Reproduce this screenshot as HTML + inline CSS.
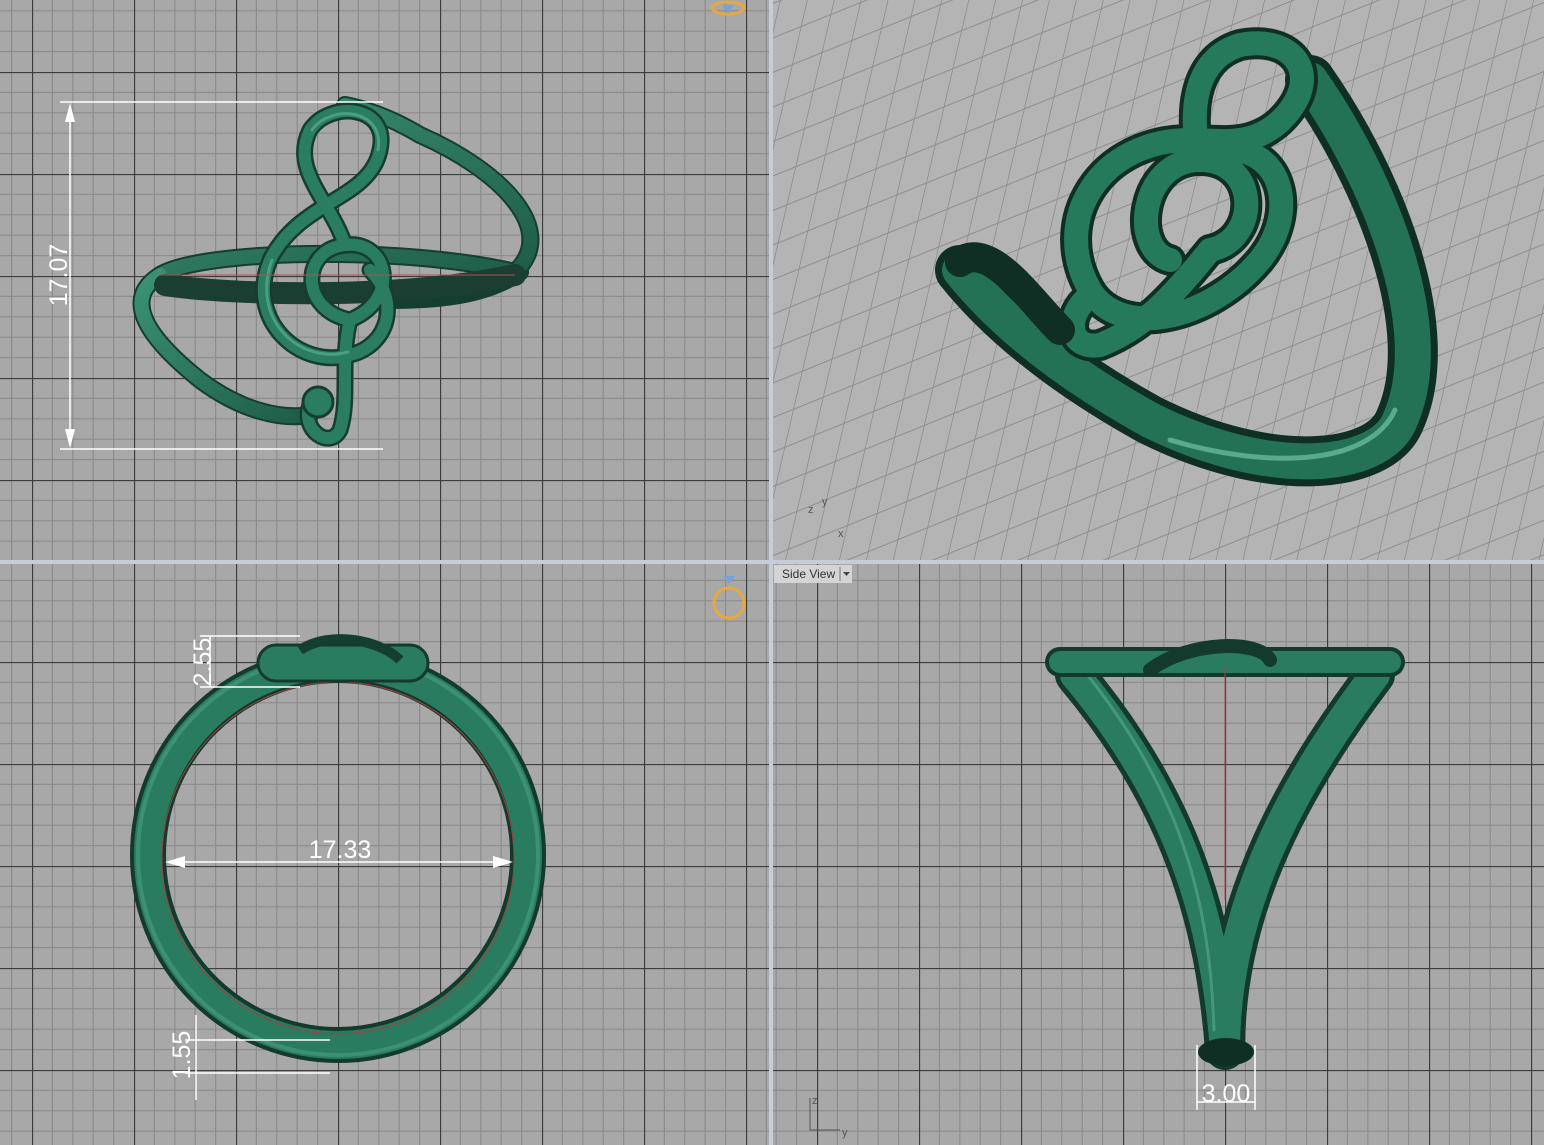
<!DOCTYPE html>
<html><head><meta charset="utf-8"><style>
html,body{margin:0;padding:0;background:#c6cdd9;}
svg{display:block}
text{font-family:"Liberation Sans",sans-serif}
</style></head><body>
<svg width="1544" height="1145" viewBox="0 0 1544 1145" xmlns="http://www.w3.org/2000/svg">
<defs>
<pattern id="gTL" x="32" y="72" width="102" height="102" patternUnits="userSpaceOnUse">
<rect width="102" height="102" fill="#a8a8a8"/>
<g stroke="#8c8c8c" stroke-width="1.2">
<path d="M20.4 0V102M40.8 0V102M61.2 0V102M81.6 0V102M0 20.4H102M0 40.8H102M0 61.2H102M0 81.6H102"/></g>
<path d="M0.5 0V102M0 0.5H102" stroke="#3c3c3c" stroke-width="1.3"/>
</pattern>
<pattern id="gBL" x="32" y="50" width="102" height="102" patternUnits="userSpaceOnUse">
<rect width="102" height="102" fill="#a8a8a8"/>
<g stroke="#8c8c8c" stroke-width="1.2">
<path d="M20.4 0V102M40.8 0V102M61.2 0V102M81.6 0V102M0 20.4H102M0 40.8H102M0 61.2H102M0 81.6H102"/></g>
<path d="M0.5 0V102M0 0.5H102" stroke="#3c3c3c" stroke-width="1.3"/>
</pattern>
<pattern id="gBR" x="1225" y="50" width="102" height="102" patternUnits="userSpaceOnUse">
<rect width="102" height="102" fill="#a8a8a8"/>
<g stroke="#8c8c8c" stroke-width="1.2">
<path d="M20.4 0V102M40.8 0V102M61.2 0V102M81.6 0V102M0 20.4H102M0 40.8H102M0 61.2H102M0 81.6H102"/></g>
<path d="M0.5 0V102M0 0.5H102" stroke="#3c3c3c" stroke-width="1.3"/>
</pattern>
<pattern id="gTR" width="32" height="32" patternUnits="userSpaceOnUse" patternTransform="translate(780 0) rotate(-22) skewX(-35)">
<rect width="32" height="32" fill="#b4b4b4"/>
<path d="M0.5 0V32M0 0.5H32" stroke="#8e8e8e" stroke-width="1"/>
</pattern>
<linearGradient id="gr" x1="0" y1="0" x2="1" y2="1">
<stop offset="0" stop-color="#3a9274"/><stop offset="1" stop-color="#1f5c47"/></linearGradient>
</defs>

<rect x="0" y="0" width="769" height="560" fill="url(#gTL)"/>
<rect x="773" y="0" width="771" height="560" fill="url(#gTR)"/>
<rect x="0" y="564" width="769" height="581" fill="url(#gBL)"/>
<rect x="773" y="564" width="771" height="581" fill="url(#gBR)"/>

<!-- TL ring -->
<g fill="none" stroke-linecap="round" stroke-linejoin="round">
<g stroke="#153d30" stroke-width="18">
<path d="M160 275 C200 250 400 245 515 272 C560 230 500 170 420 135 C395 120 370 110 345 105"/>
<path d="M160 275 C120 300 150 340 200 380 C240 410 280 420 310 415"/>
<path d="M520 272 C480 300 420 300 380 300"/>
</g>
<g stroke="url(#gr)" stroke-width="14">
<path d="M160 275 C200 250 400 245 515 272 C560 230 500 170 420 135 C395 120 370 110 345 105"/>
<path d="M160 275 C120 300 150 340 200 380 C240 410 280 420 310 415"/>
</g>
<path d="M165 285 C230 295 400 300 515 275" stroke="#1a3e31" stroke-width="22"/>
<g stroke="#153d30" stroke-width="17">
<path d="M350 320 C300 310 300 250 345 245 C390 240 400 300 350 320 M345 245 C330 200 290 170 310 130 C330 100 390 105 380 150 C370 200 300 200 270 260 C245 320 300 370 350 355 C390 345 400 300 370 270 M350 320 C340 360 350 400 340 430 C330 450 300 430 310 405"/>
</g>
<g stroke="#2b7d61" stroke-width="12">
<path d="M350 320 C300 310 300 250 345 245 C390 240 400 300 350 320 M345 245 C330 200 290 170 310 130 C330 100 390 105 380 150 C370 200 300 200 270 260 C245 320 300 370 350 355 C390 345 400 300 370 270 M350 320 C340 360 350 400 340 430 C330 450 300 430 310 405"/>
</g>
<g stroke="#5fb497" stroke-width="3" opacity=".6">
<path d="M312 130 C330 104 385 108 378 150 M272 260 C250 320 300 365 348 352"/>
</g>
<circle cx="318" cy="402" r="15" fill="#2b7d61" stroke="#153d30" stroke-width="3"/>
</g>
<line x1="160" y1="275" x2="515" y2="275" stroke="#b05050" stroke-width="1"/>
<!-- TL dims -->
<g stroke="#fff" stroke-width="1.5">
<line x1="60" y1="102" x2="383" y2="102"/><line x1="60" y1="449" x2="383" y2="449"/>
<line x1="70" y1="118" x2="70" y2="434"/>
</g>
<path d="M70 103 L65 122 L75 122Z M70 448 L65 429 L75 429Z" fill="#fff"/>
<text transform="translate(67 275) rotate(-90)" fill="#fff" font-size="25" text-anchor="middle">17.07</text>
<!-- small icon TL -->
<g transform="translate(728 8)"><ellipse cx="0" cy="0" rx="16" ry="6" fill="none" stroke="#e8a840" stroke-width="3"/><path d="M-6 -3 L6 -3 L0 6Z" fill="#7aa0d8"/></g>

<!-- TR ring perspective -->
<g fill="none" stroke-linecap="round">
<path d="M960 270 C1000 320 1060 370 1150 420 C1270 480 1380 470 1400 420 C1440 330 1380 180 1310 80" stroke="#0f2f24" stroke-width="50"/>
<path d="M960 270 C1000 320 1060 370 1150 420 C1270 480 1380 470 1400 420 C1440 330 1380 180 1310 80" stroke="#237256" stroke-width="36"/>
<path d="M1170 440 C1270 470 1370 465 1395 410" stroke="#6fc5a5" stroke-width="5" opacity=".7"/>
<g stroke="#0f2f24" stroke-width="32">
<path d="M1170 260 C1130 250 1140 160 1200 160 C1260 160 1260 240 1210 250 M1200 160 C1190 120 1190 60 1240 45 C1290 35 1320 70 1290 110 C1260 150 1220 140 1190 140 C1100 140 1050 220 1090 290 C1120 340 1210 320 1260 260 C1300 210 1280 150 1230 150 M1210 250 C1170 300 1140 330 1100 345 C1070 350 1065 320 1085 300"/>
</g>
<g stroke="#267a5c" stroke-width="24">
<path d="M1170 260 C1130 250 1140 160 1200 160 C1260 160 1260 240 1210 250 M1200 160 C1190 120 1190 60 1240 45 C1290 35 1320 70 1290 110 C1260 150 1220 140 1190 140 C1100 140 1050 220 1090 290 C1120 340 1210 320 1260 260 C1300 210 1280 150 1230 150 M1210 250 C1170 300 1140 330 1100 345 C1070 350 1065 320 1085 300"/>
</g>
<path d="M960 262 C990 240 1030 300 1060 330" stroke="#0f2f24" stroke-width="30"/>
</g>
<text x="808" y="513" font-size="11" fill="#555">z</text><text x="822" y="505" font-size="11" fill="#555">y</text><text x="838" y="537" font-size="11" fill="#555">x</text>

<!-- BL ring -->
<circle cx="338" cy="855" r="190" fill="none" stroke="#133a2d" stroke-width="36"/>
<circle cx="338" cy="855" r="190" fill="none" stroke="#2a7c60" stroke-width="28"/>
<circle cx="338" cy="855" r="200" fill="none" stroke="#4aa083" stroke-width="4" opacity=".6"/>
<circle cx="338" cy="858" r="176" fill="none" stroke="#a04040" stroke-width="1"/>
<rect x="258" y="645" width="170" height="36" rx="18" fill="#2a7c60" stroke="#133a2d" stroke-width="3"/>
<path d="M300 650 C330 630 380 640 400 660" fill="none" stroke="#153d30" stroke-width="10"/>
<g stroke="#fff" stroke-width="1.5">
<line x1="200" y1="636" x2="300" y2="636"/><line x1="200" y1="687" x2="300" y2="687"/>
<line x1="210" y1="636" x2="210" y2="687"/>
<line x1="170" y1="862" x2="508" y2="862"/>
<line x1="185" y1="1040" x2="330" y2="1040"/><line x1="185" y1="1073" x2="330" y2="1073"/>
<line x1="196" y1="1015" x2="196" y2="1100"/>
</g>
<path d="M165 862 L185 856 L185 868Z M513 862 L493 856 L493 868Z" fill="#fff"/>
<text x="340" y="858" font-size="25" fill="#fff" text-anchor="middle">17.33</text>
<text transform="translate(211 662) rotate(-90)" font-size="25" fill="#fff" text-anchor="middle">2.55</text>
<text transform="translate(190 1055) rotate(-90)" font-size="25" fill="#fff" text-anchor="middle">1.55</text>
<g transform="translate(729 603)"><circle r="15" fill="none" stroke="#e8a840" stroke-width="3"/><path d="M-6 -27 L6 -27 L0 -19Z" fill="#7aa0d8"/></g>

<!-- BR ring side view -->
<g fill="none" stroke-linecap="round">
<path d="M1075 675 C1180 800 1215 920 1225 1050 M1375 675 C1280 800 1225 920 1225 1050" stroke="#133a2d" stroke-width="40"/>
<path d="M1075 675 C1180 800 1215 920 1225 1050 M1375 675 C1280 800 1225 920 1225 1050" stroke="#2a7c60" stroke-width="30"/>
<path d="M1085 672 C1180 790 1210 900 1214 1030" stroke="#5fb497" stroke-width="3" opacity=".5"/>
<path d="M1060 662 L1390 662" stroke="#133a2d" stroke-width="30"/>
<path d="M1060 662 L1390 662" stroke="#2a7c60" stroke-width="22"/>
<path d="M1150 670 C1190 640 1260 640 1270 660" stroke="#133a2d" stroke-width="14"/>
</g>
<ellipse cx="1226" cy="1052" rx="28" ry="14" fill="#0f2f24"/>
<line x1="1225" y1="665" x2="1225" y2="900" stroke="#b04040" stroke-width="1"/>
<g stroke="#fff" stroke-width="1.5">
<line x1="1197" y1="1045" x2="1197" y2="1110"/><line x1="1255" y1="1045" x2="1255" y2="1110"/>
<line x1="1197" y1="1102" x2="1255" y2="1102"/>
</g>
<text x="1226" y="1102" font-size="25" fill="#fff" text-anchor="middle">3.00</text>
<path d="M810 1098 V1130 H840" stroke="#555" fill="none"/>
<text x="812" y="1104" font-size="11" fill="#555">z</text><text x="842" y="1136" font-size="11" fill="#555">y</text>

<!-- side view label -->
<rect x="774" y="565" width="78" height="18" fill="#d4d4d4"/>
<text x="782" y="578" font-size="12" fill="#333">Side View</text>
<line x1="840" y1="567" x2="840" y2="581" stroke="#777"/>
<path d="M843 572 L850 572 L846.5 576Z" fill="#444"/>

<!-- dividers -->
<rect x="769" y="0" width="4" height="1145" fill="#c6cdd9"/>
<rect x="0" y="560" width="1544" height="4" fill="#c6cdd9"/>
</svg>
</body></html>
